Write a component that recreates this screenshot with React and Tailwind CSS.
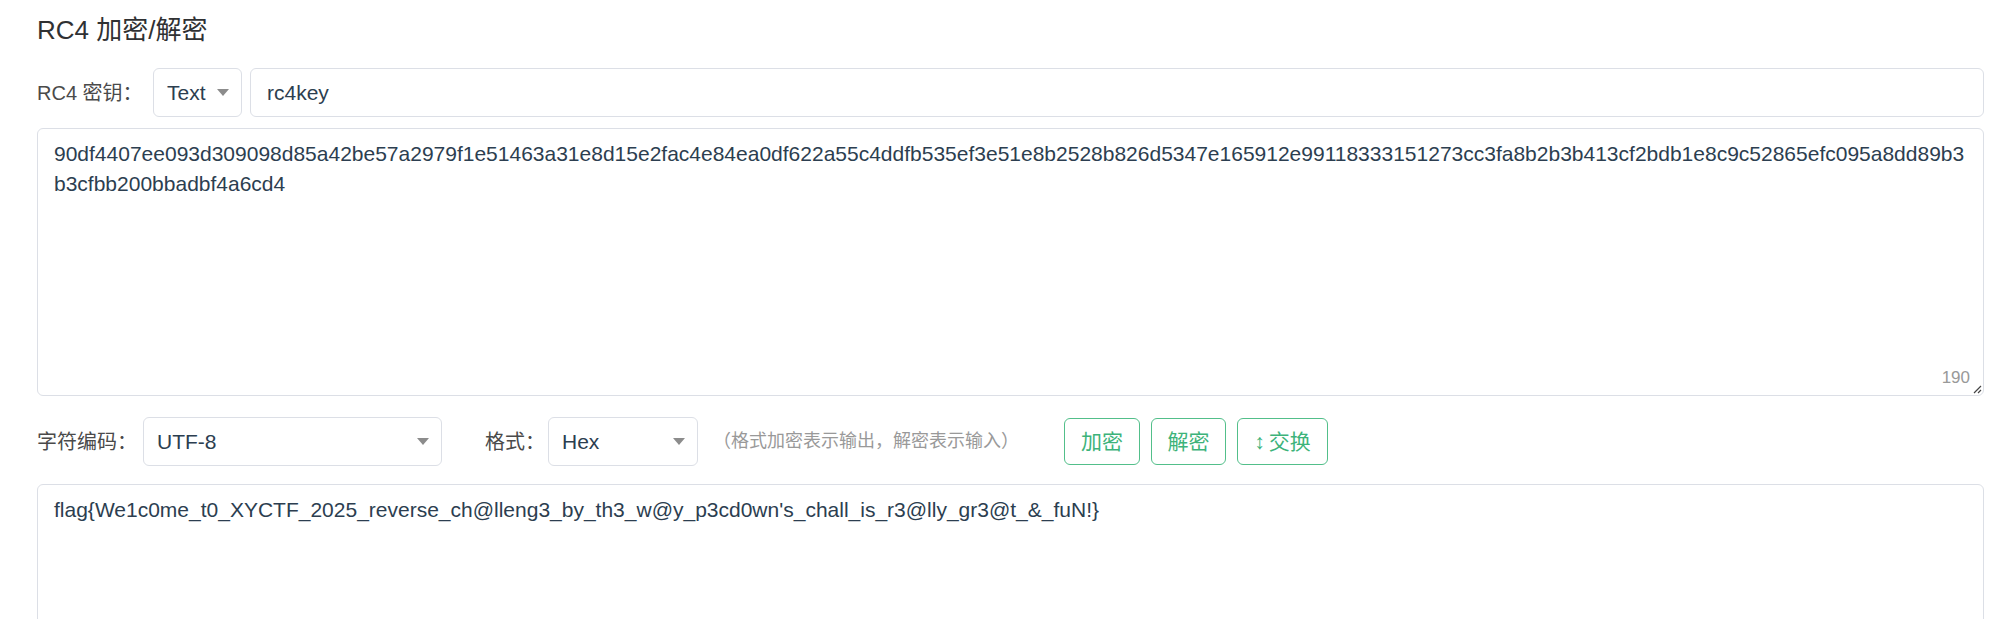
import React from "react";

const FONT = { fontFamily: '"Liberation Sans", Arial, "Noto Sans CJK SC", sans-serif' };

function Arrow() {
  return (
    <svg width="12" height="8" viewBox="0 0 12 8" className="shrink-0">
      <path d="M0 0 L12 0 L6 7 Z" fill="#8c8c8c" />
    </svg>
  );
}

function Select({ value, className }) {
  return (
    <div
      className={`flex items-center justify-between h-[49px] border border-[#dcdfe6] rounded-[6px] bg-white pl-[13px] pr-[12px] text-[21px] text-[#2c3e50] ${className}`}
    >
      <span>{value}</span>
      <Arrow />
    </div>
  );
}

function GreenButton({ children, className }) {
  return (
    <button
      className={`h-[47px] border border-[#52bf8a] rounded-[6px] bg-white text-[#3db37a] text-[21px] flex items-center justify-center ${className}`}
    >
      {children}
    </button>
  );
}

export default function App() {
  const line1 =
    "90df4407ee093d309098d85a42be57a2979f1e51463a31e8d15e2fac4e84ea0df622a55c4ddfb535ef3e51e8b2528b826d5347e165912e99118333151273cc3fa8b2b3b413cf2bdb1e8c9c52865efc095a8dd89b3";
  const line2 = "b3cfbb200bbadbf4a6cd4";
  return (
    <div style={FONT} className="w-[2011px] h-[619px] overflow-hidden bg-white pl-[37px] pr-[27px] pt-[13px]">
      <h1 className="text-[26px] leading-[34px] text-[#303133] font-normal">RC4 加密/解密</h1>

      <div className="mt-[21px] flex items-center h-[49px]">
        <span className="text-[20px] text-[#4a4a4a] w-[116px] shrink-0">RC4 密钥：</span>
        <Select value="Text" className="w-[89px] shrink-0" />
        <div className="ml-[8px] flex-1 h-[49px] border border-[#dcdfe6] rounded-[6px] flex items-center pl-[16px] text-[21px] text-[#2c3e50]">
          rc4key
        </div>
      </div>

      <div className="relative mt-[11px] h-[268px] border border-[#dcdfe6] rounded-[6px] px-[16px] pt-[10px] text-[21px] leading-[30px] text-[#2c3e50]">
        <div className="whitespace-nowrap">{line1}</div>
        <div className="whitespace-nowrap">{line2}</div>
        <span className="absolute right-[13px] bottom-[7px] text-[17px] leading-[20px] text-[#999]">190</span>
        <svg className="absolute right-[1px] bottom-[1px]" width="10" height="10" viewBox="0 0 10 10">
          <path d="M9 2 L2 9 M9 6 L6 9" stroke="#444" strokeWidth="1.2" />
        </svg>
      </div>

      <div className="mt-[21px] flex items-center h-[49px]">
        <span className="text-[20px] text-[#4a4a4a] w-[106px] shrink-0">字符编码：</span>
        <Select value="UTF-8" className="w-[299px] shrink-0" />
        <span className="ml-[43px] text-[20px] text-[#4a4a4a] w-[63px] shrink-0">格式：</span>
        <Select value="Hex" className="w-[150px] shrink-0" />
        <span className="ml-[15px] text-[18px] text-[#999] whitespace-nowrap">（格式加密表示输出，解密表示输入）</span>
        <div className="ml-[45px] flex gap-[11px]">
          <GreenButton className="w-[76px]">加密</GreenButton>
          <GreenButton className="w-[75px]">解密</GreenButton>
          <GreenButton className="w-[91px]">
            <span className="mr-[4px]">↕</span>交换
          </GreenButton>
        </div>
      </div>

      <div className="mt-[18px] h-[220px] border border-[#dcdfe6] rounded-[6px] px-[16px] pt-[10px] text-[21px] leading-[30px] text-[#2c3e50] whitespace-nowrap">
        flag{"{"}We1c0me_t0_XYCTF_2025_reverse_ch@lleng3_by_th3_w@y_p3cd0wn's_chall_is_r3@lly_gr3@t_&_fuN!{"}"}
      </div>
    </div>
  );
}
